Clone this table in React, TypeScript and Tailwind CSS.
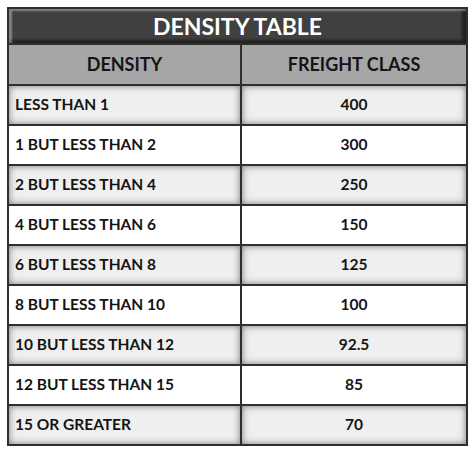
import React from 'react';

const rows: [string, string][] = [
  ['LESS THAN 1', '400'],
  ['1 BUT LESS THAN 2', '300'],
  ['2 BUT LESS THAN 4', '250'],
  ['4 BUT LESS THAN 6', '150'],
  ['6 BUT LESS THAN 8', '125'],
  ['8 BUT LESS THAN 10', '100'],
  ['10 BUT LESS THAN 12', '92.5'],
  ['12 BUT LESS THAN 15', '85'],
  ['15 OR GREATER', '70'],
];

export default function App() {
  return (
    <div className="w-[474px] h-[451px] bg-white pt-[7px] pl-[7px] font-['Lato',sans-serif] font-bold text-[#141414]">
      <div className="w-[461px] border-2 border-[#2e2e2e] border-b-0">
        <div className="h-[34px] bg-[#404040] flex items-center justify-center text-white text-[23px] leading-none shadow-[inset_3px_2px_2px_rgba(255,255,255,0.35),inset_-4px_-3px_3px_rgba(0,0,0,0.5)]">
          DENSITY TABLE
        </div>
        <div className="grid grid-cols-[233px_1fr] h-[41px] bg-[#a6a6a6] border-t-2 border-[#2e2e2e] text-[18px]">
          <div className="flex items-center justify-center border-r-2 border-[#2e2e2e]">DENSITY</div>
          <div className="flex items-center justify-center">FREIGHT CLASS</div>
        </div>
        {rows.map(([d, f], i) => (
          <div
            key={d}
            className={`grid grid-cols-[233px_1fr] h-[40px] border-t-2 border-[#2e2e2e] text-[15.5px] ${
              i % 2 === 0 ? 'bg-[#efefef]' : 'bg-white'
            } ${i === rows.length - 1 ? 'border-b-2 h-[42px]' : ''}`}
          >
            <div
              className={`flex items-center pl-[6px] border-r-2 border-[#2e2e2e] ${
                i % 2 === 0 ? 'shadow-[inset_0_0_7px_rgba(0,0,0,0.5)]' : ''
              }`}
            >
              {d}
            </div>
            <div
              className={`flex items-center justify-center ${
                i % 2 === 0 ? 'shadow-[inset_0_0_7px_rgba(0,0,0,0.5)]' : ''
              }`}
            >
              {f}
            </div>
          </div>
        ))}
      </div>
    </div>
  );
}
